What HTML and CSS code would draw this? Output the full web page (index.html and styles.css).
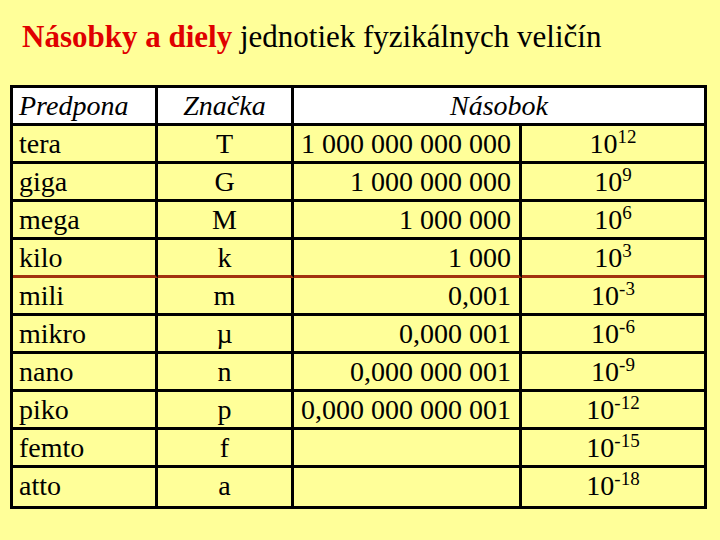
FILE: index.html
```html
<!DOCTYPE html>
<html>
<head>
<meta charset="utf-8">
<link rel="stylesheet" href="styles.css">
</head>
<body>
<h1 class="title"><span class="accent">Násobky a diely</span> jednotiek fyzikálnych veličín</h1>
<div class="grid">
  <div class="cell head italic left">Predpona</div>
  <div class="cell head italic center">Značka</div>
  <div class="cell head italic center span2 last">Násobok</div>

  <div class="cell left">tera</div><div class="cell center">T</div><div class="cell right">1 000 000 000 000</div><div class="cell center last">10<sup class="exp">12</sup></div>
  <div class="cell left">giga</div><div class="cell center">G</div><div class="cell right">1 000 000 000</div><div class="cell center last">10<sup class="exp">9</sup></div>
  <div class="cell left">mega</div><div class="cell center">M</div><div class="cell right">1 000 000</div><div class="cell center last">10<sup class="exp">6</sup></div>
  <div class="cell left red">kilo</div><div class="cell center red">k</div><div class="cell right red">1 000</div><div class="cell center last red">10<sup class="exp">3</sup></div>
  <div class="cell left">mili</div><div class="cell center">m</div><div class="cell right">0,001</div><div class="cell center last">10<sup class="exp">-3</sup></div>
  <div class="cell left">mikro</div><div class="cell center">µ</div><div class="cell right">0,000 001</div><div class="cell center last">10<sup class="exp">-6</sup></div>
  <div class="cell left">nano</div><div class="cell center">n</div><div class="cell right">0,000 000 001</div><div class="cell center last">10<sup class="exp">-9</sup></div>
  <div class="cell left">piko</div><div class="cell center">p</div><div class="cell right">0,000 000 000 001</div><div class="cell center last">10<sup class="exp">-12</sup></div>
  <div class="cell left">femto</div><div class="cell center">f</div><div class="cell right"></div><div class="cell center last">10<sup class="exp">-15</sup></div>
  <div class="cell left bottom">atto</div><div class="cell center bottom">a</div><div class="cell right bottom"></div><div class="cell center last bottom">10<sup class="exp">-18</sup></div>
</div>
</body>
</html>
```
FILE: styles.css
```css
html, body {
  margin: 0;
  padding: 0;
  background: #ffff99;
}
body {
  width: 720px;
  height: 540px;
  overflow: hidden;
  font-family: "Liberation Serif", serif;
  color: #000;
}
.title {
  margin: 0;
  padding: 19px 0 0 22px;
  height: 85px;
  box-sizing: border-box;
  font-family: "Liberation Serif", serif;
  font-size: 31px;
  font-weight: normal;
  line-height: 36px;
  white-space: nowrap;
}
.accent {
  color: #e00000;
  font-weight: bold;
}
.grid {
  display: grid;
  grid-template-columns: 145px 136px 228px 182px;
  grid-auto-rows: 38px;
  margin-left: 10px;
  width: 697px;
  border: 3px solid #000;
  box-sizing: border-box;
  font-family: "Liberation Serif", serif;
  font-size: 28px;
}
.cell {
  font-family: "Liberation Serif", serif;
  border-right: 3px solid #000;
  border-bottom: 3px solid #000;
  line-height: 35px;
  white-space: nowrap;
}
.cell.last { border-right: none; }
.cell.bottom { border-bottom: none; }
.cell.red { border-bottom-color: #a3320f; }
.head { background: #fff; }
.italic { font-style: italic; }
.span2 { grid-column: span 2; }
.left { text-align: left; padding-left: 6px; }
.center { text-align: center; }
.right { text-align: right; padding-right: 8px; }
.exp {
  font-size: 19px;
  line-height: 0;
  vertical-align: 10px;
}
```
